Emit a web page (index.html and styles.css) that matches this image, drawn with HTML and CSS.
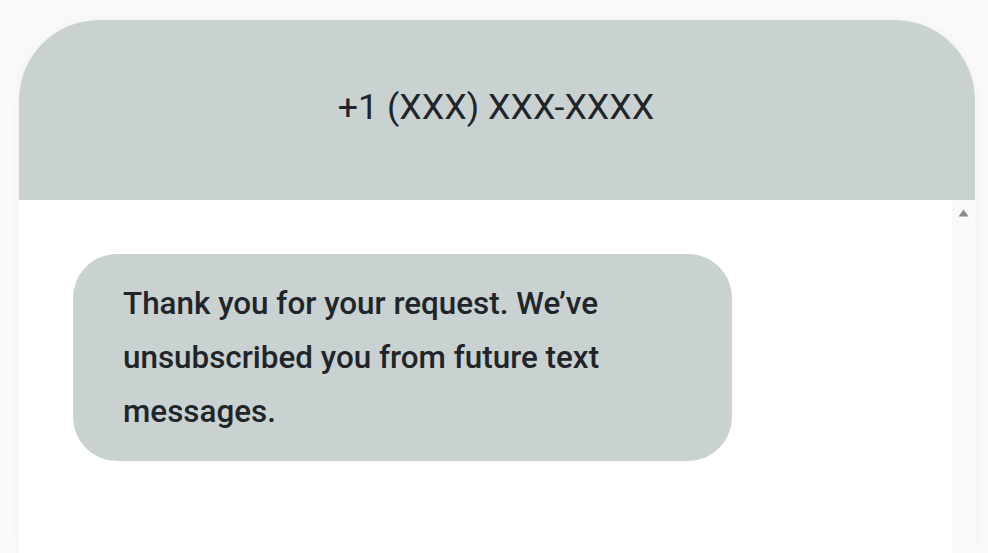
FILE: index.html
```html
<!DOCTYPE html>
<html>
<head>
<meta charset="utf-8">
<link rel="stylesheet" href="styles.css">
</head>
<body>
<div class="phone">
  <header class="header">
    <h1 class="title">+1 (XXX) XXX-XXXX</h1>
  </header>
  <div class="content">
    <div class="messages">
      <div class="bubble">Thank you for your request. We’ve unsubscribed you from future text messages.</div>
    </div>
    <div class="scrollbar">
      <svg class="arrow" width="11" height="8" viewBox="0 0 11 8"><path d="M5.5 0.5 L10.5 7.5 L0.5 7.5 Z" fill="#8a8a8a"/></svg>
    </div>
  </div>
</div>
</body>
</html>
```
FILE: styles.css
```css
html, body {
  margin: 0;
  padding: 0;
  background: #fafafa;
  overflow: hidden;
}
body {
  padding: 20px 13px 0 19px;
  height: 553px;
  box-sizing: border-box;
  font-family: Roboto, "Liberation Sans", sans-serif;
  color: #212529;
}
.phone {
  width: 956px;
  height: 533px;
  display: flex;
  flex-direction: column;
  border-radius: 80px 80px 0 0;
  background: #ffffff;
  box-shadow: 0 0 18px rgba(0, 0, 0, 0.04);
}
.header {
  height: 180px;
  flex: none;
  background: #c9d2d1;
  border-radius: 80px 80px 0 0;
  display: flex;
  align-items: center;
  justify-content: center;
}
.title {
  margin: 0;
  font-size: 35.8px;
  font-weight: 400;
  line-height: 1;
  color: #212529;
  position: relative;
  top: -2px;
  left: -1px;
}
.content {
  flex: 1;
  display: flex;
  min-height: 0;
}
.messages {
  flex: 1;
  padding: 54px 0 0 54px;
}
.bubble {
  width: 659px;
  box-sizing: border-box;
  background: #c9d2d1;
  border-radius: 44px;
  padding: 23px 50px 22px 50px;
  font-size: 31.4px;
  font-weight: 500;
  line-height: 54px;
  color: #212529;
}
.scrollbar {
  width: 23px;
  flex: none;
  background: #f9f9f9;
  display: flex;
  justify-content: center;
  padding-top: 9px;
  box-sizing: border-box;
}
.arrow {
  display: block;
}
```
